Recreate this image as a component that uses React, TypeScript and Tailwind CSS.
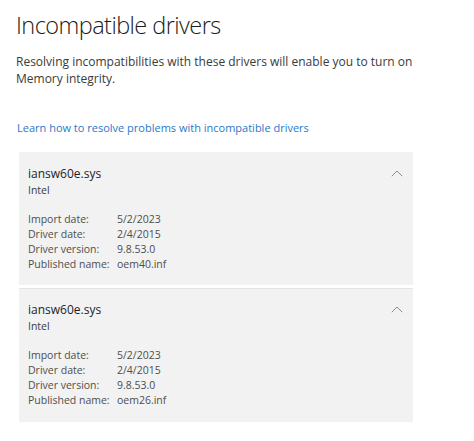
import React from "react";

const drivers = [
  { name: "iansw60e.sys", vendor: "Intel", importDate: "5/2/2023", driverDate: "2/4/2015", version: "9.8.53.0", published: "oem40.inf" },
  { name: "iansw60e.sys", vendor: "Intel", importDate: "5/2/2023", driverDate: "2/4/2015", version: "9.8.53.0", published: "oem26.inf" },
];

function Chevron() {
  return (
    <svg width="12" height="7" viewBox="0 0 12 7" className="mt-[5px] shrink-0">
      <path d="M0.8 6.2 L6 1 L11.2 6.2" fill="none" stroke="#8c8c8c" strokeWidth="1" />
    </svg>
  );
}

function Card({ d, first }: { d: (typeof drivers)[number]; first: boolean }) {
  return (
    <div
      className={
        first
          ? "bg-[#f2f2f2] w-[394px] h-[133px] pl-[9px] pr-[10px] pt-[13px]"
          : "bg-[#f2f2f2] w-[394px] h-[134px] pl-[9px] pr-[10px] pt-[12px] border-t border-[#e4e4e4]"
      }
    >
      <div className="flex justify-between">
        <div>
          <div className="text-[12px] leading-[17px] text-[#1e1e1e]">{d.name}</div>
          <div className="text-[10.5px] leading-[16px] text-[#3a3a3a]">{d.vendor}</div>
        </div>
        <Chevron />
      </div>
      <div className="mt-[14px] grid grid-cols-[89px_1fr] text-[10.5px] leading-[15px] text-[#4e4e4e]">
        <div>Import date:</div>
        <div>{d.importDate}</div>
        <div>Driver date:</div>
        <div>{d.driverDate}</div>
        <div>Driver version:</div>
        <div>{d.version}</div>
        <div>Published name:</div>
        <div>{d.published}</div>
      </div>
    </div>
  );
}

export default function App() {
  return (
    <div className="w-[474px] h-[441px] bg-white font-['Open_Sans',sans-serif] pl-[16px] pt-[9px]">
      <h1 className="text-[23.5px] leading-[32px] font-light tracking-[-0.55px] text-[#1b1b1b]">Incompatible drivers</h1>
      <p className="mt-[12px] text-[12px] leading-[17px] text-[#3a3a3a] w-[410px]">
        Resolving incompatibilities with these drivers will enable you to turn on Memory integrity.
      </p>
      <div className="mt-[33px] ml-[1px] text-[11px] leading-[15px] text-[#2a78c8]">
        Learn how to resolve problems with incompatible drivers
      </div>
      <div className="mt-[17px] ml-[3px] flex flex-col gap-[3px]">
        {drivers.map((d, i) => (
          <Card key={i} d={d} first={i === 0} />
        ))}
      </div>
    </div>
  );
}
